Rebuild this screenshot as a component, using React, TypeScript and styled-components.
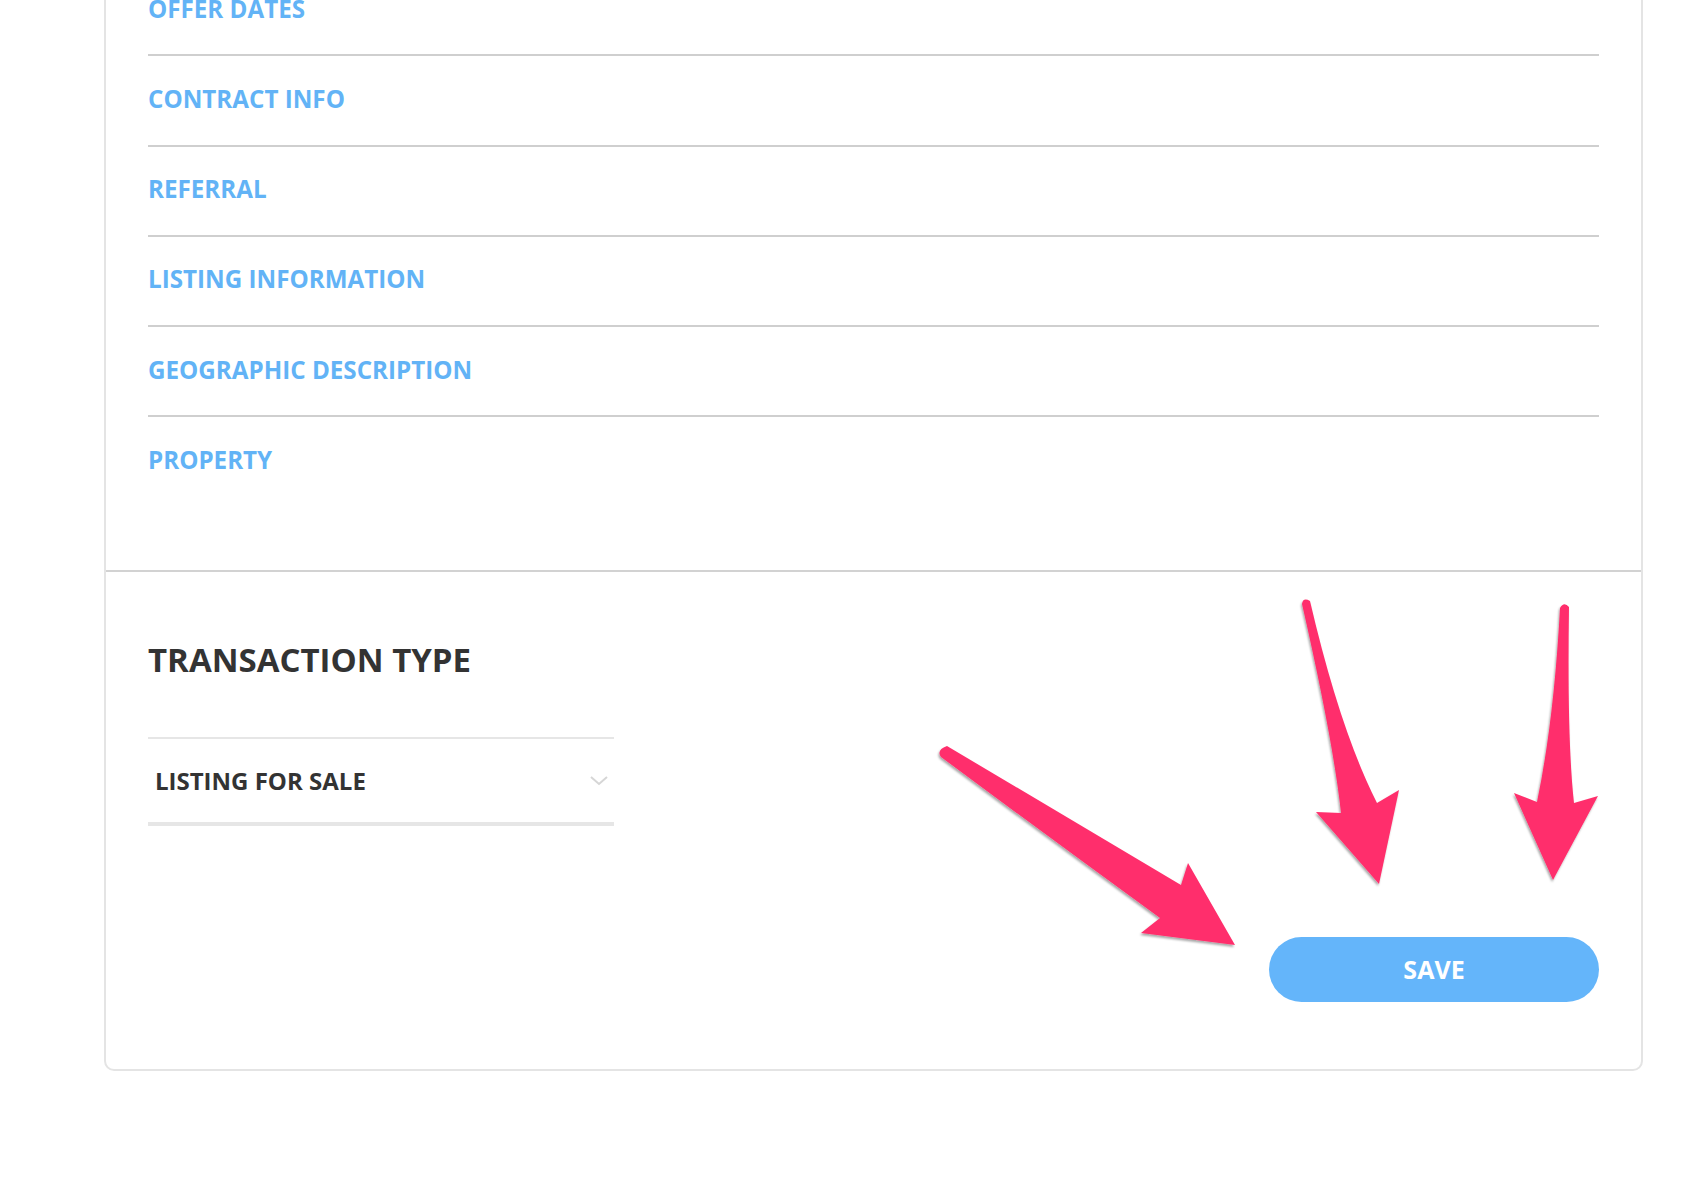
import React from 'react';
import styled, { createGlobalStyle } from 'styled-components';

const GlobalStyle = createGlobalStyle`
  html, body {
    margin: 0;
    padding: 0;
    background: #fff;
  }
  body {
    font-family: "Open Sans", "Liberation Sans", sans-serif;
  }
`;

const Page = styled.div`
  position: relative;
  width: 1704px;
  height: 1184px;
  overflow: hidden;
  padding-left: 104px;
  box-sizing: border-box;
`;

const Card = styled.div`
  width: 1539px;
  margin-top: -36px;
  box-sizing: border-box;
  border: 2px solid #e4e4e4;
  border-radius: 0 0 10px 10px;
  background: #fff;
`;

const SectionList = styled.ul`
  list-style: none;
  margin: 0;
  padding: 0 42px 64px;
`;

const SectionItem = styled.li`
  height: 88.25px;
  box-sizing: content-box;
  padding-bottom: 0;
  display: flex;
  align-items: center;
  border-bottom: 2px solid #cfcfcf;
  &:last-child {
    border-bottom: none;
  }
`;

const SectionLink = styled.a`
  color: #62b3f6;
  font-size: 24.2px;
  font-weight: 700;
  text-decoration: none;
  margin-top: -4px;
`;

const Footer = styled.div`
  height: 499px;
  box-sizing: border-box;
  border-top: 2px solid #d2d2d2;
  padding: 68px 42px 67px;
  display: flex;
  justify-content: space-between;
  align-items: flex-end;
`;

const TypeColumn = styled.div`
  align-self: flex-start;
  width: 466px;
`;

const Heading = styled.h2`
  margin: 0 0 57px;
  color: #333;
  font-size: 33px;
  line-height: 40px;
  font-weight: 700;
`;

const Select = styled.div`
  height: 89px;
  box-sizing: border-box;
  border-top: 2px solid #e6e6e6;
  border-bottom: 4px solid #e6e6e6;
  padding: 0 6px 0 7px;
  display: flex;
  align-items: center;
  justify-content: space-between;
  color: #333;
  font-size: 24px;
  font-weight: 700;
`;

const Chevron = styled.svg`
  width: 18px;
  height: 10px;
  margin-top: 2px;
`;

const SaveButton = styled.button`
  width: 330px;
  height: 65px;
  border: none;
  border-radius: 33px;
  background: #64b5fa;
  color: #fff;
  font-family: "Open Sans", "Liberation Sans", sans-serif;
  font-size: 25px;
  font-weight: 700;
  cursor: pointer;
`;

const Arrows = styled.svg`
  position: absolute;
  top: 0;
  left: 0;
  pointer-events: none;
`;

const sections = [
  'OFFER DATES',
  'CONTRACT INFO',
  'REFERRAL',
  'LISTING INFORMATION',
  'GEOGRAPHIC DESCRIPTION',
  'PROPERTY',
];

const arrowPaths = [
  'M 947 746 L 1181 885 L 1188 863 L 1235 945 L 1141 933 L 1160 918 Q 1050 838 941 757 Q 936 750 947 746 Z',
  'M 1310 601 Q 1340 730 1377 803 L 1399 790 L 1379 884 L 1316 812 L 1341 813 Q 1333 740 1302 604 Q 1303 597 1310 601 Z',
  'M 1569 607 Q 1567 740 1574 803 L 1598 796 L 1553 880 L 1514 793 L 1537 802 Q 1554 720 1560 608 Q 1564 601 1569 607 Z',
];

const App: React.FC = () => (
  <Page>
    <GlobalStyle />
    <Card>
      <SectionList>
        {sections.map((s) => (
          <SectionItem key={s}>
            <SectionLink href="#">{s}</SectionLink>
          </SectionItem>
        ))}
      </SectionList>
      <Footer>
        <TypeColumn>
          <Heading>TRANSACTION TYPE</Heading>
          <Select>
            LISTING FOR SALE
            <Chevron viewBox="0 0 18 10">
              <path d="M1 1 L9 8 L17 1" fill="none" stroke="#d6d6d6" strokeWidth="2" />
            </Chevron>
          </Select>
        </TypeColumn>
        <SaveButton>SAVE</SaveButton>
      </Footer>
    </Card>
    <Arrows width="1704" height="1184" viewBox="0 0 1704 1184">
      <defs>
        <filter id="shadow" x="-10%" y="-10%" width="130%" height="130%">
          <feDropShadow dx="-1" dy="2" stdDeviation="1.2" floodColor="#000" floodOpacity="0.35" />
        </filter>
      </defs>
      {arrowPaths.map((d, i) => (
        <path key={i} d={d} fill="#ff2f6c" filter="url(#shadow)" />
      ))}
    </Arrows>
  </Page>
);

export default App;
